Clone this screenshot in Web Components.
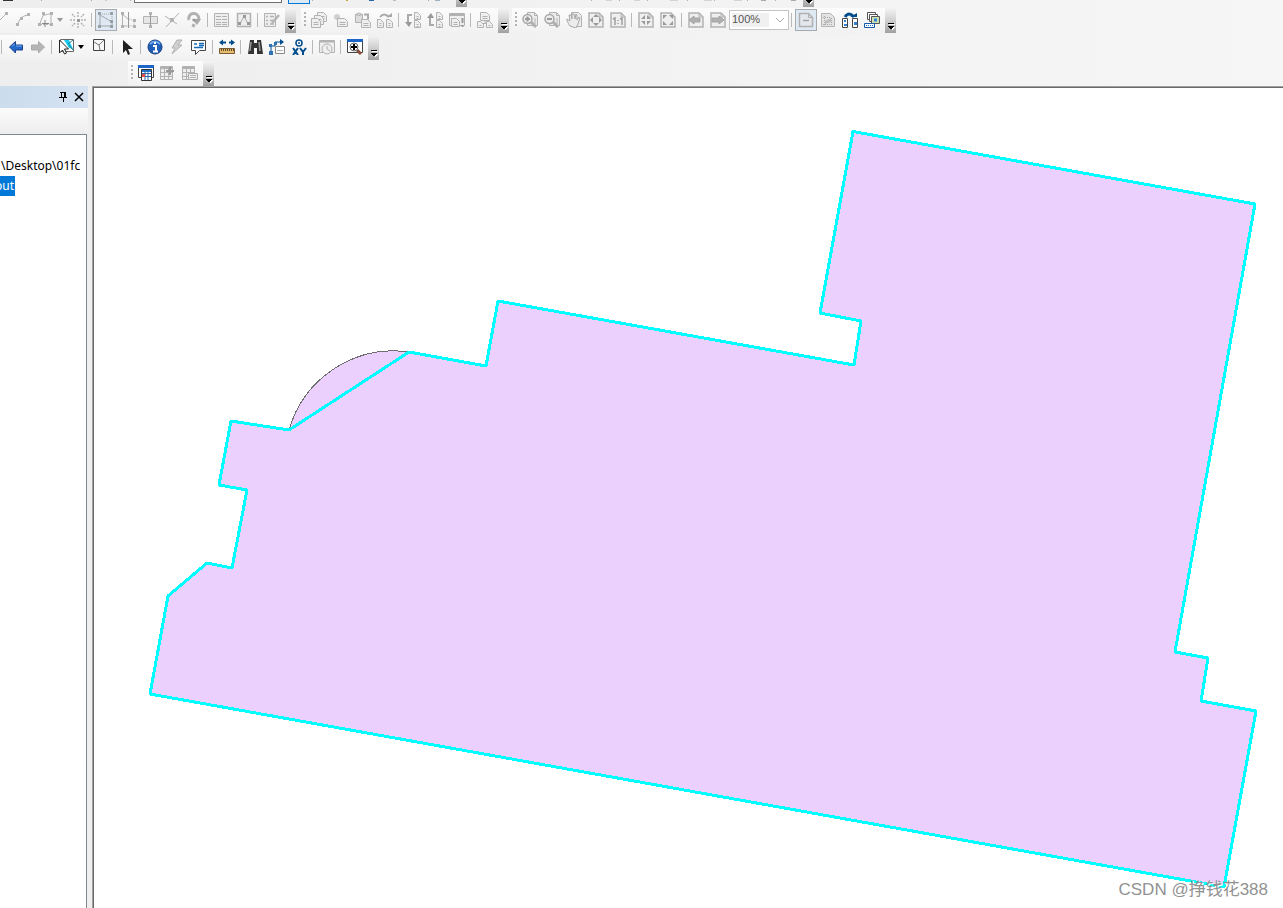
<!DOCTYPE html>
<html lang="en">
<head>
<meta charset="utf-8">
<title>Map workbench</title>
<style>
html, body { margin: 0; height: 100%; }
body { font-family: "Noto Sans", "Open Sans", sans-serif; overflow: hidden; }
</style>
</head>
<body>
<gis-workbench></gis-workbench>

<template id="workbench">
<style>
:host { display: grid; grid-template-rows: auto 1fr; height: 100vh; background: linear-gradient(90deg, #eeeeee, #f6f6f6); }
header { display: grid; grid-template-rows: 8px 27px 26px 25px; min-width: 0; }
.row { display: flex; align-items: flex-start; overflow: hidden; gap: 3px; }
.top { align-items: flex-end; gap: 0; }
.edit { margin-left: -10px; gap: 5px; }
.edit tool-bar + tool-bar + tool-bar { margin-left: -2px; }
.tools { margin-left: -1px; }
.raster { padding-left: 128px; }
main { display: grid; grid-template-columns: 88px 1fr; gap: 4px; min-height: 0; }
</style>
<header>
  <div class="row top"><cut-strip></cut-strip></div>
  <div class="row edit">
    <tool-bar>
      <tool-button icon="line" label="Straight segment"></tool-button>
      <tool-button icon="arc" label="End point arc"></tool-button>
      <tool-button icon="trace" label="Trace" menu></tool-button>
      <tool-button icon="burst" label="Point"></tool-button>
      <tool-separator></tool-separator>
      <tool-button icon="vertices" label="Edit vertices" active></tool-button>
      <tool-button icon="reshape" label="Reshape feature"></tool-button>
      <tool-button icon="cut" label="Cut polygons"></tool-button>
      <tool-button icon="split" label="Split"></tool-button>
      <tool-button icon="rotate" label="Rotate"></tool-button>
      <tool-separator></tool-separator>
      <tool-button icon="attrs" label="Attributes"></tool-button>
      <tool-button icon="sketch" label="Sketch properties"></tool-button>
      <tool-separator></tool-separator>
      <tool-button icon="create" label="Create features"></tool-button>
      <overflow-button></overflow-button>
    </tool-bar>
    <tool-bar grip>
      <tool-button icon="pages" label="Pages"></tool-button>
      <tool-button icon="newpage" label="New page"></tool-button>
      <tool-button icon="dbpage" label="Load page"></tool-button>
      <tool-button icon="swap" label="Swap pages"></tool-button>
      <tool-separator></tool-separator>
      <tool-button icon="down" label="Move down"></tool-button>
      <tool-button icon="up" label="Move up"></tool-button>
      <tool-button icon="winpage" label="Page window"></tool-button>
      <tool-separator></tool-separator>
      <tool-button icon="tree" label="Page tree"></tool-button>
      <overflow-button></overflow-button>
    </tool-bar>
    <tool-bar grip>
      <tool-button icon="zin" label="Zoom in page"></tool-button>
      <tool-button icon="zout" label="Zoom out page"></tool-button>
      <tool-button icon="pan" label="Pan page"></tool-button>
      <tool-button icon="whole" label="Whole page"></tool-button>
      <tool-button icon="one" label="Actual size"></tool-button>
      <tool-separator></tool-separator>
      <tool-button icon="fixin" label="Fixed zoom in"></tool-button>
      <tool-button icon="fixout" label="Fixed zoom out"></tool-button>
      <tool-separator></tool-separator>
      <tool-button icon="prev" label="Previous extent"></tool-button>
      <tool-button icon="next" label="Next extent"></tool-button>
      <zoom-combo></zoom-combo>
      <tool-separator></tool-separator>
      <tool-button icon="draft" label="Draft mode" active></tool-button>
      <tool-button icon="focus" label="Focus data frame"></tool-button>
      <tool-button icon="layout" label="Change layout"></tool-button>
      <tool-button icon="driven" label="Data driven pages"></tool-button>
      <overflow-button></overflow-button>
    </tool-bar>
  </div>
  <div class="row tools">
    <tool-bar>
      <tool-separator></tool-separator>
      <tool-button icon="back" label="Back"></tool-button>
      <tool-button icon="forward" label="Forward"></tool-button>
      <tool-separator></tool-separator>
      <tool-button icon="select" label="Select features" menu dark></tool-button>
      <tool-button icon="clear" label="Clear selection"></tool-button>
      <tool-separator></tool-separator>
      <tool-button icon="pointer" label="Select elements"></tool-button>
      <tool-separator></tool-separator>
      <tool-button icon="info" label="Identify"></tool-button>
      <tool-button icon="bolt" label="Hyperlink"></tool-button>
      <tool-button icon="popup" label="HTML popup"></tool-button>
      <tool-separator></tool-separator>
      <tool-button icon="measure" label="Measure"></tool-button>
      <tool-separator></tool-separator>
      <tool-button icon="find" label="Find"></tool-button>
      <tool-button icon="route" label="Find route"></tool-button>
      <tool-button icon="xy" label="Go to XY"></tool-button>
      <tool-separator></tool-separator>
      <tool-button icon="time" label="Time slider"></tool-button>
      <tool-separator></tool-separator>
      <tool-button icon="viewer" label="Viewer window"></tool-button>
      <overflow-button></overflow-button>
    </tool-bar>
  </div>
  <div class="row raster">
    <tool-bar grip>
      <tool-button icon="table" label="Open table"></tool-button>
      <tool-button icon="addtable" label="Add to table"></tool-button>
      <tool-button icon="tablelist" label="Table list"></tool-button>
      <overflow-button></overflow-button>
    </tool-bar>
  </div>
</header>
<main>
  <contents-panel>
    <contents-item>\Desktop\01fc</contents-item>
    <contents-item selected>out</contents-item>
  </contents-panel>
  <map-view><map-credit slot="credit">CSDN @挣钱花388</map-credit></map-view>
</main>
</template>

<template id="strip">
<style>
:host { display: flex; flex: none; align-items: flex-end; height: 8px; }
svg { display: block; flex: none; }
input { box-sizing: border-box; width: 148px; height: 22px; margin: 0 0 5px; border: 1px solid #707070; background: #fff; }
button { box-sizing: border-box; width: 22px; height: 22px; margin: 0 0 4px 6px; padding: 0; border: 1px solid #0078d7; background: #dceaf6; }
overflow-button { margin-bottom: 1px; }
</style>
<svg width="134" height="8" shape-rendering="crispEdges"><path d="M3 0h10v1H3z" fill="#333"/><path d="M41 0h1v1h-1zM91 0h1v1h-1zM130 0h1v1h-1z" fill="#aaa"/><path d="M105 0h2v1h-2z" fill="#ccc"/></svg>
<input type="text" aria-label="Scale">
<button type="button" aria-label="Editor toolbar"></button>
<svg width="144" height="8" shape-rendering="crispEdges"><path d="M2 0h1v1H2zM118 0h1v1h-1z" fill="#aaa"/><path d="M36 0h2v1h-2z" fill="#c5a53a"/><path d="M59 0h5v1h-5z" fill="#2a68a8"/><path d="M83 0h3v1h-3z" fill="#bbb"/><path d="M125 0h5v1h-5z" fill="#9fb0c4"/></svg>
<overflow-button></overflow-button>
<svg width="334" height="8" shape-rendering="crispEdges"><path d="M124 0h1v1h-1zM152 0h1v1h-1zM180 0h1v1h-1zM220 0h1v1h-1zM247 0h1v1h-1zM280 0h1v1h-1zM308 0h1v1h-1z" fill="#b0b0b0"/><path d="M139 0h6v1h-6zM167 0h6v1h-6zM203 0h8v1h-8zM237 0h8v1h-8zM267 0h8v1h-8z" fill="#d4d4d4"/><path d="M294 0h5v1h-5zM324 0h5v1h-5z" fill="#aaa"/></svg>
<overflow-button></overflow-button>
</template>

<template id="contents">
<style>
:host { display: grid; grid-template-rows: 22px 26px 1fr; min-height: 0; }
.title { display: flex; justify-content: flex-end; align-items: center; gap: 2px; padding-right: 2px; background: linear-gradient(90deg, #cbdcec, #d5e2f1); }
button { display: grid; place-items: center; width: 14px; height: 14px; padding: 0; border: 0; background: none; }
.bar { background: linear-gradient(#fbfbfb, #eeeeee); }
.list { display: flex; flex-direction: column; align-items: flex-start; margin-right: 1px; padding-top: 21px; border: solid #808890; border-width: 1px 1px 0 0; background: #fff; overflow: hidden; }
</style>
<div class="title">
  <button type="button" aria-label="Auto hide"><svg width="10" height="10" shape-rendering="crispEdges"><path d="M2 0h6v1H2zM3 0h1v6H3zM6 0h2v6H6zM1 5h8v1H1zM5 6h1v4H5z"/></svg></button>
  <button type="button" aria-label="Close"><svg width="10" height="10"><path d="M1 1l8 8M9 1l-8 8" stroke="#000" stroke-width="1.5"/></svg></button>
</div>
<div class="bar"></div>
<div class="list"><slot></slot></div>
</template>

<template id="map">
<style>
:host { display: block; position: relative; min-width: 0; min-height: 0; overflow: hidden; border: solid #a0a0a0; border-width: 1px 0 0 1px; }
.canvas { box-sizing: border-box; height: 100%; border: solid #696969; border-width: 1px 0 0 1px; background: #fff; }
svg { display: block; width: 100%; height: 100%; }
.credit { position: absolute; right: 15px; bottom: 6px; }
</style>
<div class="canvas">
<svg viewBox="94 88 1189 820" preserveAspectRatio="xMinYMin meet" role="img" aria-label="Building outline">
  <g shape-rendering="crispEdges">
  <path d="M289 430A109 109 0 0 1 409 352Z" fill="#ebcffc" stroke="#6e6e6e"/>
  <path d="M853 131.500L1255 204L1175 652L1208 658L1201 701L1256 711L1224 887L150 694L168 596L207 563L232 568L247 490L219 485L231 421L289 430L409 352L486 366L498 301L854 365L861 321L820 313Z" fill="#ebcffc" stroke="#0ff" stroke-width="3" stroke-linejoin="round"/>
  </g>
</svg>
</div>
<div class="credit"><slot name="credit"></slot></div>
</template>

<script>
const G = '#b2b2b2', B = '#004c8c';
const box = (x, y, w, h) => `M${x} ${y}h${w}v${h}h${-w}z`;
const g = (d, extra = '') => `<path d="${d}" fill="none" stroke="${G}"/>${extra}`;
const fill = (d, c = G) => `<path d="${d}" fill="${c}"/>`;
const page = (x, y, w = 8, h = 8) => `<path d="M${x} ${y}h${w - 3}l3 3v${h - 3}h${-w}z" fill="#efefef" stroke="${G}"/><path d="M${x + 2} ${y + 4}h${w - 4}M${x + 2} ${y + 6}h${w - 4}" stroke="${G}"/>`;
const sheet = `<path d="M1 1h10l4 4v10H1z" fill="#efefef" stroke="${G}" stroke-width="1.500"/><path d="M11 1v4h4" fill="none" stroke="${G}"/>`;
const lens = sign => `<path d="M5.500.500h7l3 3v10h-10z" fill="#ececec" stroke="${G}"/><path d="M12.500.500v3h3M13 6v6" fill="none" stroke="${G}"/><circle cx="5.500" cy="7" r="4.500" fill="#ececec" stroke="#a8a8a8" stroke-width="1.500"/><path d="M3 7h5${sign ? 'M5.500 4.500v5' : ''}" stroke="#999" stroke-width="2"/><path d="M9 10l5 5" stroke="#b0b0b0" stroke-width="3"/>`;

const ICONS = {
  line: g('M0 15L13 2', fill(box(12, 0, 3, 3))),
  arc: g('M3 13Q4 4 13 3', fill(box(1, 11, 3, 3) + box(5, 5, 3, 3) + box(12, 1, 3, 3))),
  trace: g('M1.500 12.500L5 3.500L13 1.500V13', `<path d="M2 12.500h12" stroke="${G}" stroke-dasharray="2 1"/>` + fill(box(4, 0, 3, 3) + box(12, 0, 3, 3) + box(12, 11, 3, 3) + box(0, 11, 3, 3)) + '<path d="M7 8v7M4 11.500h7" stroke="#888"/>'),
  burst: `<path d="M8 0v5M8 11v5M0 8h5M11 8h5M2 2l3 3M11 11l3 3M14 2l-3 3M5 11l-3 3" stroke="${G}" stroke-width="1.500" stroke-dasharray="2 1"/>` + fill(box(7, 7, 3, 3), '#999'),
  vertices: `<path d="M2 2v12h12v-4L2 3" fill="none" stroke="#a0a5aa"/><path d="M4 2h10v8" fill="none" stroke="#a0a5aa" stroke-dasharray="1 1"/>` + fill(box(0, 0, 3, 3) + box(12, 0, 3, 3) + box(0, 13, 3, 3) + box(12, 13, 3, 3) + box(12, 8, 3, 3), '#9a9fa4'),
  reshape: g('M2.500 2v12h5M2 2l6 5', `<path d="M8.500 0v16" stroke="#999"/><path d="M9 7l5 2v5H9" fill="none" stroke="${G}" stroke-dasharray="1 1"/>` + fill(box(1, 0, 3, 3) + box(1, 13, 3, 3) + box(13, 7, 3, 3) + box(13, 13, 3, 3))),
  cut: `<path d="M1.500 4.500h14v7h-14z" fill="#e6e6e6" stroke="${G}"/><path d="M8.500 2v12" stroke="#999"/>` + fill(box(7, 0, 3, 3) + box(7, 13, 3, 3)),
  split: g('M2 15L15 1M1 4l12 8', fill(box(6, 6, 4, 4))),
  rotate: `<path d="M3 8A5 5 0 1 1 12 9M9 14l-3-1" fill="none" stroke="${G}" stroke-width="3"/><path d="M6 7h9l-4 6z" fill="#aaa"/><circle cx="8" cy="8" r="1.500" fill="#999"/>`,
  attrs: `<path d="M.500 1.500h14v13H.500z" fill="#eee" stroke="${G}"/><path d="M2 4.500h11M2 7.500h11M2 10.500h11M2 12.500h11" stroke="${G}" stroke-dasharray="5 1"/>`,
  sketch: `<path d="M1.500 1.500h13v13h-13z" fill="#eee" stroke="${G}" stroke-width="1.500"/><path d="M4 12l4-8 4 8" fill="none" stroke="#aaa"/>` + fill(box(7, 3, 3, 3) + box(2, 10, 3, 3) + box(11, 10, 3, 3), '#999'),
  create: `<path d="M.500 1.500h11v13H.500z" fill="#eee" stroke="${G}"/><path d="M2 4.500h2M6 4.500h4M2 8.500h2M6 8.500h4M2 12h2M6 12h4" stroke="${G}" stroke-width="1.500"/><path d="M15 3l-7 8" stroke="#b4b4b4" stroke-width="2.500"/>`,
  pages: page(6.5, .5, 9, 9) + page(3.5, 3.5, 9, 9) + page(.5, 6.5, 9, 9),
  newpage: `<circle cx="4" cy="5" r="3" fill="#d0d0d0"/>` + page(4.5, 6.5, 10, 8),
  dbpage: `<path d="M.500 2.500v8h7v-8q-3.500-3-7 0q3.500 2 7 0" fill="#ddd" stroke="${G}"/><path d="M9 2.500h4v5" fill="none" stroke="#aaa" stroke-width="2"/>` + page(6.5, 7.5, 9),
  swap: `<path d="M3 5q4-5 9 0" fill="none" stroke="#aaa" stroke-width="2"/><path d="M9 5h6V1z" fill="#aaa"/>` + page(.5, 7.5, 6, 8) + page(9.5, 7.5, 6, 8),
  down: `<path d="M7 3H3v9" fill="none" stroke="#aaa" stroke-width="2"/><path d="M0 10h7l-3 5z" fill="#999"/>` + page(9.5, .5, 6, 7) + page(9.5, 8.5, 6, 7),
  up: `<path d="M7 13H3V4" fill="none" stroke="#aaa" stroke-width="2"/><path d="M0 6h7L4 1z" fill="#999"/>` + page(9.5, .5, 6, 7) + page(9.5, 8.5, 6, 7),
  winpage: `<path d="M.500 1.500h15v12h-15z" fill="#eee" stroke="${G}"/><path d="M1 3h14" stroke="${G}" stroke-width="2"/>` + page(2.5, 6.5) + '<path d="M13.500 6v9" stroke="#999" stroke-width="2" stroke-dasharray="5 2"/>',
  tree: page(3.5, .5, 9, 8) + page(.5, 9.5, 6, 6) + page(9.5, 9.5, 6, 6) + g('M8 8v3M6 11.500h4'),
  zin: lens(true), zout: lens(false),
  pan: `<path d="M5.500.500h7l3 3v11h-10z" fill="#ececec" stroke="${G}"/><path d="M4 14Q0 8 1 7l3 2L3 3l2 0 1 4V2h2l1 5 1-5 1 1v5l2-3 1 1-2 6-2 4z" fill="#ececec" stroke="#a8a8a8"/>`,
  whole: sheet + `<path d="M8 2l3 3H5zM8 14l3-3H5zM2 8l3-3v6zM14 8l-3-3v6z" fill="#999"/>`,
  one: sheet + `<path d="M3 7l2-1v7M10 7l2-1v7M8 8v1M8 11v1" fill="none" stroke="#a0a0a0" stroke-width="1.500"/>`,
  fixin: sheet + `<path d="M7 7H3l4-4zM9 7h4L9 3zM7 9H3l4 4zM9 9h4l-4 4z" fill="#999"/>`,
  fixout: sheet + `<path d="M3 3h4L3 7zM13 3H9l4 4zM3 13h4L3 9zM13 13H9l4-4z" fill="#999"/>`,
  prev: sheet + `<path d="M1 8l5-4v2h6v4H6v2z" fill="#b0b0b0" stroke="#a4a4a4"/>`,
  next: sheet + `<path d="M14 8L9 4v2H2v4h7v2z" fill="#b0b0b0" stroke="#a4a4a4"/>`,
  draft: `<path d="M1.500 1.500h9l4 4v9h-13z" fill="#e4e8ec" stroke="#b0b0b0" stroke-width="1.500"/><path d="M10.500 1.500v4h4" fill="none" stroke="#b0b0b0"/><path d="M5 8.500h6" stroke="#a4a4a4" stroke-width="1.500"/>`,
  focus: `<path d="M1.500 1.500h9l4 4v9h-13z" fill="#e4e4e4" stroke="#b4b4b4"/><path d="M3 5.500h8M3 12.500h10M4.500 4v10M11.500 6v8" stroke="#aaa" stroke-dasharray="1 1"/><path d="M5 12V9l6-3v4z" fill="#c0c0c0"/>`,
  layout: `<path d="M3 5q4-6 9 0" fill="none" stroke="${B}" stroke-width="3"/><path d="M8 5h7V1z" fill="${B}"/><path d="M.500 6.500h5v9h-5zM10.500 6.500h5v9h-5z" fill="#fff" stroke="#444"/>` + fill(box(2, 8, 2, 2) + box(2, 12, 3, 2) + box(12, 10, 3, 3), '#2d82d8'),
  driven: `<path d="M3.500.500h8v7h-8z" fill="#fff" stroke="#555"/><path d="M5.500 2.500h8v7h-8z" fill="#fff" stroke="#555"/><path d="M7.500 4.500h8v7h-8z" fill="#cfe1b2" stroke="#555"/><path d="M10 8h3" stroke="#2d82d8" stroke-width="3"/><path d="M.500 11.500h10v4H.500z" fill="#fff" stroke="#1559a8"/><path d="M2 13.500h8" stroke="#1d75d1" stroke-dasharray="1 1"/>`,
  back: `<path d="M1.500 8L7.500 2.500v3.500h7v5h-7v3z" fill="#2468c8" stroke="#1c438b"/><path d="M4 7l3-2M8 7h6" stroke="#72a9ed"/>`,
  forward: `<path d="M14.500 8L8.500 2.500v3.500h-7v5h7v3z" fill="#b5b5b5" stroke="#aaa"/>`,
  select: `<path d="M1.500.500h13v12h-13z" fill="#fff" stroke="#666"/><path d="M5 1h5l4 9-4-1z" fill="#18c8f0"/><path d="M9 5l5-4M10 6l4 5" fill="none" stroke="#287d90"/><path d="M.500 1v13l3-3 2 4 2-1-2-4h4z" fill="#fff" stroke="#222"/>`,
  clear: `<path d="M2.500.500h11v11h-11z" fill="#f8f8f8" stroke="#444"/><path d="M3 3l5 3 5-5M8 6l1 5" fill="none" stroke="#777"/>`,
  pointer: '<path d="M4 1v13l3-3 2 5 2-1-2-5h5z" fill="#202020"/>',
  info: '<circle cx="8" cy="8" r="7" fill="#1f5fb8" stroke="#173e82"/><path d="M3 5q5-5 10 0" fill="none" stroke="#6eaaf0" stroke-width="2"/><path d="M8 3v2M6 7h3v5M6 12.500h5" fill="none" stroke="#fff" stroke-width="2"/>',
  bolt: `<path d="M8 1h5L9 6h4L3 15l3-6H3z" fill="#d0d0d0" stroke="${G}"/>`,
  popup: `<path d="M.500 1.500h14v10h-6l-4 4v-4h-4z" fill="#fff" stroke="#444"/><path d="M3 5h3M8 4.500h5M8 6.500h5M3 8.500h9" stroke="#146ab8" stroke-width="1.500"/>`,
  measure: `<path d="M3 3.500h4M10 3.500h4" stroke="${B}" stroke-width="2"/><path d="M0 3.500l4-3v6zM16 3.500l-4-3v6z" fill="${B}"/><path d="M.500 9.500h15v5H.500z" fill="#e7bd70" stroke="#7c5c34"/><path d="M2 11h13" stroke="#5e4729" stroke-width="2" stroke-dasharray="1 1"/>`,
  find: '<path d="M3 1h4v3h3V1h4l2 14h-6v-6H7v6H1z" fill="#333"/><path d="M4 3l-1 9M12 3l1 9" stroke="#999" stroke-width="1.500"/>',
  route: `<path d="M2 14V7h4V3h6" fill="none" stroke="${B}"/><path d="M11 0l4 3-4 3z" fill="${B}"/><path d="M6.500 7.500h9v7h-9z" fill="#fff" stroke="#888"/><path d="M8 11.500h6" stroke="${G}"/>` + fill(box(0, 5, 3, 3) + box(0, 12, 4, 4) + box(5, 3, 3, 3), '#2d72b2'),
  xy: `<circle cx="8" cy="4" r="3" fill="#fff" stroke="${B}" stroke-width="1.500"/><circle cx="8" cy="4" r="1" fill="${B}"/><path d="M2 9l5 7M7 9l-5 7M9 9l3 4v3M15 9l-3 4" fill="none" stroke="${B}" stroke-width="2"/>`,
  time: `<path d="M.500 1.500h15v12h-15z" fill="#eee" stroke="${G}"/><path d="M1 2.500h14" stroke="${G}" stroke-width="2"/><circle cx="8" cy="10" r="5" fill="#eee" stroke="${G}"/><path d="M8 7v3l3 2" fill="none" stroke="${G}"/>`,
  viewer: '<path d="M.500 1.500h15v12h-15z" fill="#fff" stroke="#444"/><path d="M0 1.500h16" stroke="#1d65c8" stroke-width="3"/><path d="M10 11l4 4" stroke="#874b36" stroke-width="3"/><circle cx="7" cy="8" r="4" fill="#fff" stroke="#666"/><path d="M4 8h6M7 5v6" stroke="#000" stroke-width="2"/>',
  table: '<path d="M.500.500h15v12H.500z" fill="#fff" stroke="#444"/><path d="M0 1.500h16" stroke="#1d65c8" stroke-width="3"/><path d="M3.500 4.500h10v11h-10z" fill="#fff" stroke="#333"/><path d="M4 6h9" stroke="#1d75d1" stroke-width="2"/><path d="M4 8.500h9M4 11.500h9M7 5v10M10 5v10" stroke="#2a69ac"/><path d="M4 9h3v3H4z" fill="#f04e3e"/>',
  addtable: `<path d="M.500 1.500h12v13H.500z" fill="#eee" stroke="${G}"/><path d="M1 3h12" stroke="${G}" stroke-width="2"/><path d="M1 7.500h12M1 11.500h12M4.500 2v13M8.500 2v13" stroke="${G}"/><path d="M6 6h8M10 2v8" stroke="#999" stroke-width="2"/>`,
  tablelist: `<path d="M.500 1.500h12v13H.500z" fill="#eee" stroke="${G}"/><path d="M1 3h12" stroke="${G}" stroke-width="2"/><path d="M1 7.500h12M1 11.500h12M4.500 2v13M8.500 2v13" stroke="${G}"/><path d="M6.500 8.500h9v6h-9z" fill="#eee" stroke="#aaa"/><path d="M8 10.500h6M8 12.500h6" stroke="${G}"/>`
};

class ShadowElement extends HTMLElement {
  constructor() {
    super();
    this.attachShadow({ mode: 'open' });
  }
  connectedCallback() {
    if (!this.shadowRoot.hasChildNodes()) this.shadowRoot.innerHTML = this.render();
  }
}

const fromTemplate = id => class extends HTMLElement {
  constructor() {
    super();
    this.attachShadow({ mode: 'open' }).append(document.getElementById(id).content.cloneNode(true));
  }
};

customElements.define('tool-bar', class extends ShadowElement {
  render() {
    return `<style>
      :host { display: flex; flex: none; height: 25px; align-items: flex-start; background: linear-gradient(#fcfcfc, #f1f1f1); }
      .grip { width: 7px; height: 25px; display: grid; place-items: start center; padding-top: 4px; box-sizing: border-box; }
      .grip svg { display: block; }
    </style>${this.hasAttribute('grip') ? `<div class="grip"><svg width="2" height="15"><path d="M0 0h2v2H0zM0 4h2v2H0zM0 8h2v2H0zM0 12h2v2H0z" fill="${G}"/></svg></div>` : ''}<slot></slot>`;
  }
});

customElements.define('tool-button', class extends ShadowElement {
  render() {
    const menu = this.hasAttribute('menu');
    return `<style>
      :host { display: block; flex: none; padding-top: 1px; }
      button { box-sizing: border-box; display: flex; align-items: center; justify-content: center; gap: 3px; width: 22px; height: 22px; padding: 0; border: 0; background: none; }
      :host([active]) button { border: 1px solid #a6abb0; background: #dfe9f3; }
      :host([menu]) button { width: 33px; }
      svg { display: block; flex: none; }
    </style><button type="button" aria-label="${this.getAttribute('label')}"><svg width="16" height="16" viewBox="0 0 16 16">${ICONS[this.getAttribute('icon')]}</svg>${menu ? `<svg width="6" height="4"><path d="M0 0h6L3 4z" fill="${this.hasAttribute('dark') ? '#000' : '#999'}"/></svg>` : ''}</button>`;
  }
});

customElements.define('tool-separator', class extends ShadowElement {
  render() {
    return `<style>
      :host { display: block; flex: none; width: 1px; height: 14px; margin: 5px 3px 0 2px; background: #b9b9b9; }
    </style>`;
  }
});

customElements.define('overflow-button', class extends ShadowElement {
  render() {
    return `<style>
      :host { display: block; flex: none; padding-left: 2px; }
      button { box-sizing: border-box; display: grid; place-items: end center; width: 11px; height: 25px; padding: 0 0 3px; border: 0; background: linear-gradient(#f4f4f4, #d0d0d0 50%, #a0a0a0); }
      svg { display: block; }
    </style><button type="button" aria-label="Toolbar options"><svg width="8" height="8" shape-rendering="crispEdges"><path d="M2 2h6v1H2zM2 5h6L5 8z" fill="#fff"/><path d="M1 1h6v1H1zM1 4h6v1H6v1H5v1H3V6H2V5H1z"/></svg></button>`;
  }
});

customElements.define('zoom-combo', class extends ShadowElement {
  render() {
    return `<style>
      :host { display: grid; flex: none; width: 60px; height: 20px; margin-top: 2px; }
      select, svg { grid-area: 1 / 1; }
      select { appearance: none; box-sizing: border-box; width: 60px; height: 20px; padding: 0 0 2px 2px; border: 1px solid #c4c4c4; border-radius: 0; background: linear-gradient(#f0f0f0, #f0f0f0) 2px 2px / 37px 14px no-repeat #fff; color: #555; font: 11px/16px "Liberation Sans", sans-serif; }
      svg { place-self: center end; margin-right: 5px; pointer-events: none; }
    </style><select aria-label="Page zoom"><option>100%</option></select><svg width="9" height="6"><path d="M1 1l4 4 4-4" fill="none" stroke="#aaa"/></svg>`;
  }
});

customElements.define('contents-item', class extends ShadowElement {
  render() {
    return `<style>
      :host { display: block; flex: none; box-sizing: border-box; height: 20px; padding-left: 1px; font-size: 12px; line-height: 20px; color: #000; white-space: nowrap; }
      :host([selected]) { width: 15px; padding: 0 1px 0 0; display: flex; justify-content: flex-end; overflow: hidden; background: #0078d7; color: #fff; }
    </style><slot></slot>`;
  }
});

customElements.define('map-credit', class extends ShadowElement {
  render() {
    return `<style>
      :host { display: block; font: 17px/24px "Liberation Sans", "Noto Sans CJK SC", sans-serif; color: #929292; text-shadow: 1px 1px 0 #fff; white-space: nowrap; }
    </style><slot></slot>`;
  }
});

customElements.define('cut-strip', fromTemplate('strip'));
customElements.define('contents-panel', fromTemplate('contents'));
customElements.define('map-view', fromTemplate('map'));
customElements.define('gis-workbench', fromTemplate('workbench'));
</script>
</body>
</html>
